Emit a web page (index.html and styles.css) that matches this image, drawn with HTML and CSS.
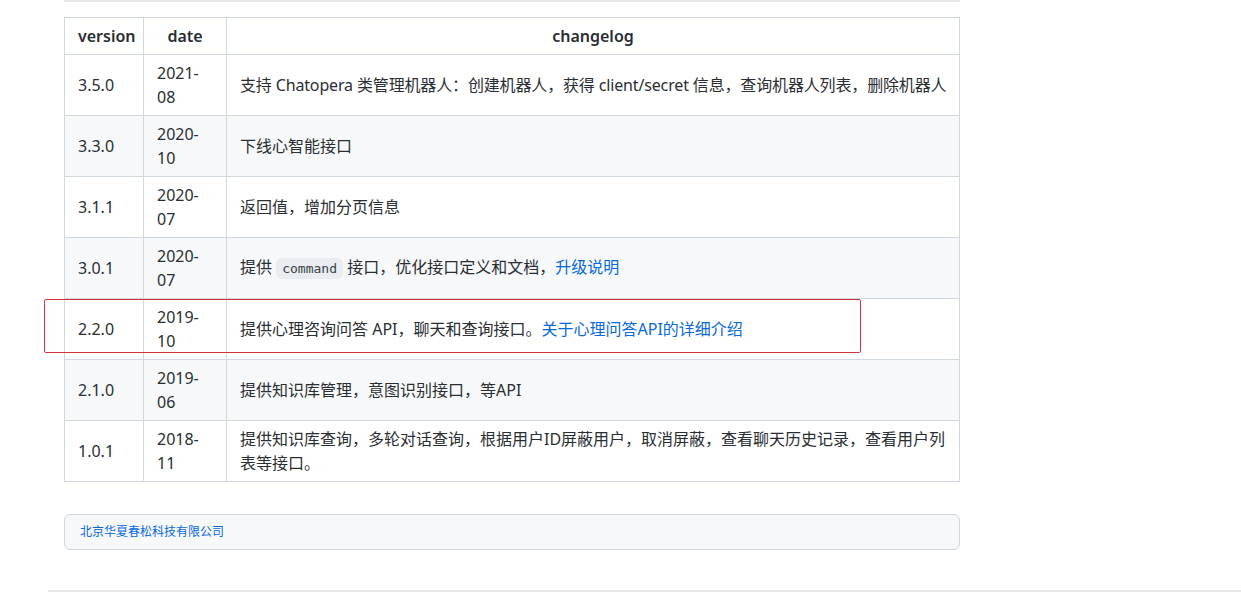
FILE: index.html
```html
<!DOCTYPE html>
<html lang="zh-CN">
<head>
<meta charset="utf-8">
<title>changelog</title>
<link rel="stylesheet" href="styles.css">
</head>
<body>
<div class="page">
  <div class="top-rule"></div>
  <table class="log">
    <colgroup>
      <col class="c-ver">
      <col class="c-date">
      <col class="c-log">
    </colgroup>
    <thead>
      <tr><th>version</th><th>date</th><th>changelog</th></tr>
    </thead>
    <tbody>
      <tr><td>3.5.0</td><td>2021-08</td><td class="tight">支持 Chatopera 类管理机器人：创建机器人，获得 client/secret 信息，查询机器人列表，删除机器人</td></tr>
      <tr><td>3.3.0</td><td>2020-10</td><td>下线心智能接口</td></tr>
      <tr><td>3.1.1</td><td>2020-07</td><td>返回值，增加分页信息</td></tr>
      <tr><td>3.0.1</td><td>2020-07</td><td>提供 <code>command</code> 接口，优化接口定义和文档，<a href="#">升级说明</a></td></tr>
      <tr><td>2.2.0</td><td>2019-10</td><td>提供心理咨询问答 API，聊天和查询接口。<a href="#">关于心理问答API的详细介绍</a></td></tr>
      <tr><td>2.1.0</td><td>2019-06</td><td>提供知识库管理，意图识别接口，等API</td></tr>
      <tr><td>1.0.1</td><td>2018-11</td><td>提供知识库查询，多轮对话查询，根据用户ID屏蔽用户，取消屏蔽，查看聊天历史记录，查看用户列表等接口。</td></tr>
    </tbody>
  </table>
  <div class="footer-box"><a href="#">北京华夏春松科技有限公司</a></div>
</div>
<div class="bottom-rule"></div>
<div class="highlight"></div>
</body>
</html>
```

FILE: styles.css
```css
html, body {
  margin: 0;
  padding: 0;
  background: #ffffff;
}
body {
  font-family: "Noto Sans", "Noto Sans CJK SC", sans-serif;
  font-size: 16px;
  line-height: 24px;
  color: #2a2e33;
  position: relative;
  min-height: 599px;
}
.page {
  width: 896px;
  margin-left: 64px;
}
.top-rule {
  height: 2px;
  background: #e4e7ea;
}
.log {
  margin-top: 15px;
  width: 896px;
  border-collapse: collapse;
  table-layout: fixed;
}
.c-ver { width: 79px; }
.c-date { width: 83px; }
.log th,
.log td {
  border: 1px solid #d0d7de;
  padding: 6px 13px;
}
.log th {
  font-weight: 600;
  text-align: center;
}
.log tbody tr:nth-child(2n) {
  background: #f6f8fa;
}
.log td {
  vertical-align: middle;
}
.log td.tight {
  letter-spacing: -0.15px;
  white-space: nowrap;
}
.log a,
.footer-box a {
  color: #0969da;
  text-decoration: none;
}
.log code {
  font-family: "DejaVu Sans Mono", "Liberation Mono", monospace;
  font-size: 13px;
  padding: 3px 6px;
  color: #3a3f45;
  background: rgba(175, 184, 193, 0.18);
  border-radius: 6px;
}
.footer-box {
  margin-top: 32px;
  height: 34px;
  border: 1px solid #d0d7de;
  border-radius: 6px;
  background: #f6f8fa;
  padding: 0 15px;
  display: flex;
  align-items: center;
  font-size: 12px;
}
.bottom-rule {
  margin-top: 40px;
  margin-left: 48px;
  height: 2px;
  background: #e4e7ea;
}
.highlight {
  position: absolute;
  left: 44px;
  top: 299px;
  width: 815px;
  height: 52px;
  border: 1px solid #d2343a;
  border-radius: 2px;
}
```
